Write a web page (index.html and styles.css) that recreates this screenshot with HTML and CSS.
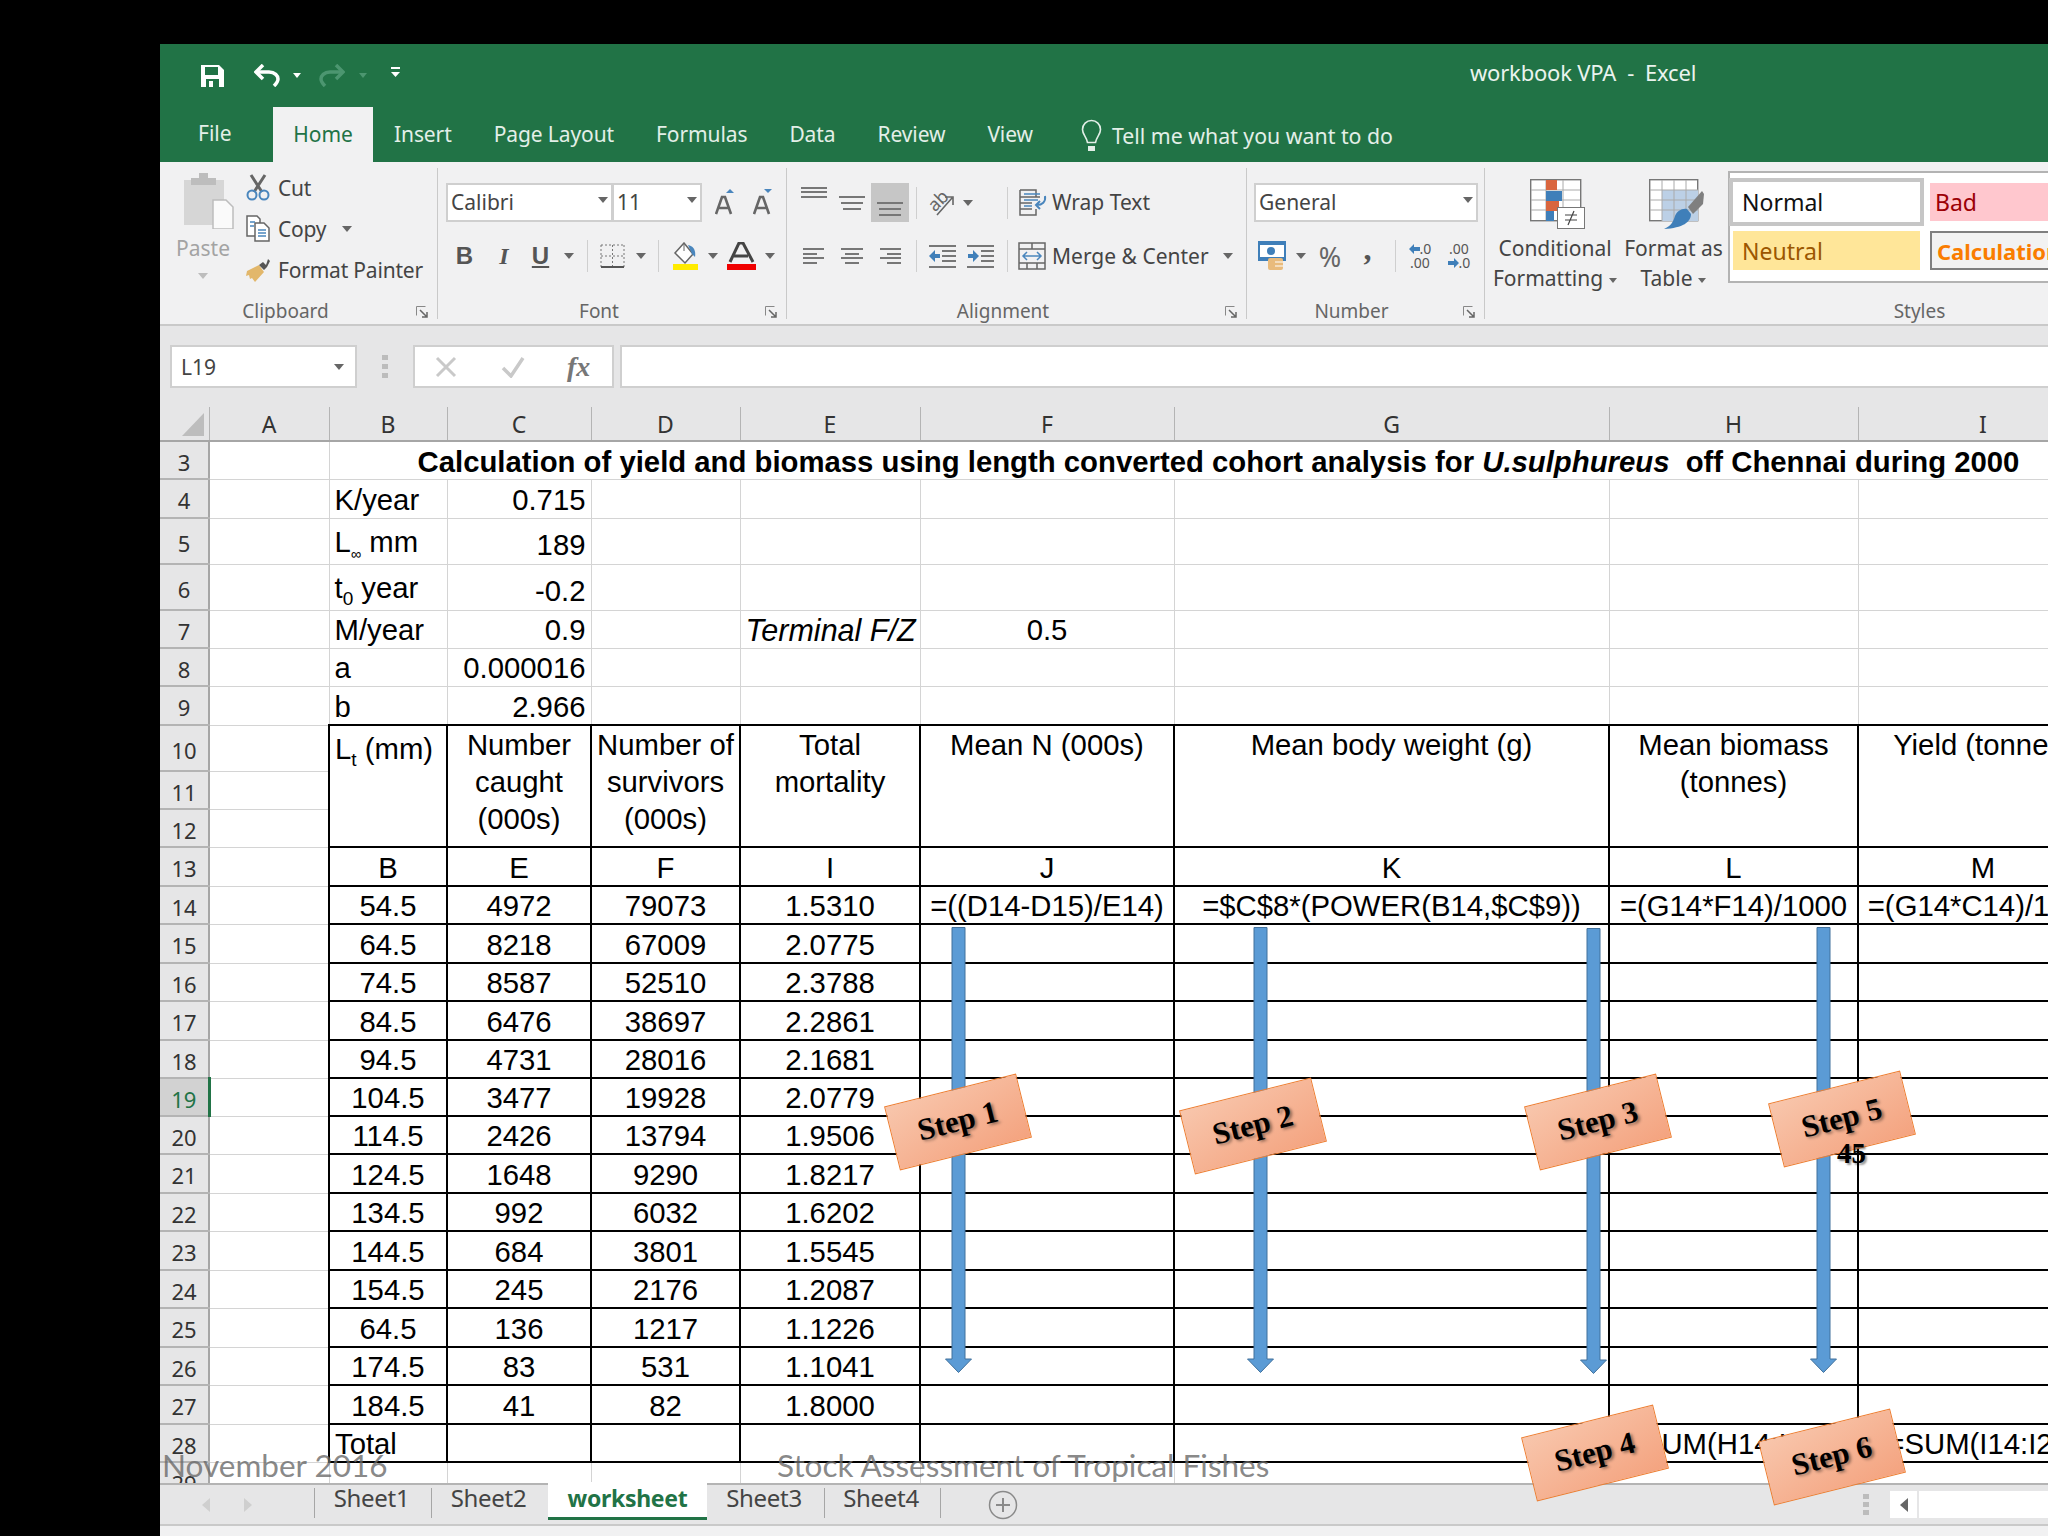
FILE: index.html
```html
<!DOCTYPE html>
<html lang="en">
<head>
<meta charset="utf-8">
<title>workbook VPA - Excel</title>
<link rel="stylesheet" href="styles.css">
</head>
<body>
<div class="slide">
  <header class="titlebar">
    <div class="qat">
      <svg class="qat-save" viewBox="0 0 25 24"><path d="M1 1h18l5 5v17H1z" fill="#fff"/><rect x="5" y="3" width="13" height="8" fill="#217346"/><rect x="6" y="15" width="13" height="8" fill="#217346"/><rect x="9" y="17" width="4" height="6" fill="#fff"/></svg>
      <svg class="qat-undo" viewBox="0 0 26 23"><path d="M9 1 2 8l7 7" fill="none" stroke="#fff" stroke-width="3.5"/><path d="M3 8h12c6 0 9 4 9 7s-2 5-4 7" fill="none" stroke="#fff" stroke-width="3.5"/></svg>
      <span class="caret caret-white qat-c1"></span>
      <svg class="qat-redo" viewBox="0 0 26 23"><path d="M17 1l7 7-7 7" fill="none" stroke="#4c9670" stroke-width="3.5"/><path d="M23 8H11C5 8 2 12 2 15s2 5 4 7" fill="none" stroke="#4c9670" stroke-width="3.5"/></svg>
      <span class="caret caret-dim qat-c2"></span>
      <svg class="qat-more" viewBox="0 0 9 11"><rect width="9" height="2" fill="#fff"/><path d="M0 5h9l-4.500 5z" fill="#fff"/></svg>
    </div>
    <div class="doc-title">workbook VPA &nbsp;-&nbsp; Excel</div>
  </header>
  <nav class="tabs">
    <span class="tab tab-file">File</span>
    <span class="tab tab-active">Home</span>
    <span class="tab">Insert</span>
    <span class="tab">Page Layout</span>
    <span class="tab">Formulas</span>
    <span class="tab">Data</span>
    <span class="tab">Review</span>
    <span class="tab">View</span>
    <span class="tell">
      <svg class="bulb" viewBox="0 0 21 34"><path d="M10.500 1.500a9 9 0 0 0-9 9c0 5 4 7 5 13h8c1-6 5-8 5-13a9 9 0 0 0-9-9z" fill="none" stroke="#e3efe8" stroke-width="1.600"/><path d="M7 27h7v5H7z" fill="#e3efe8"/></svg>
      Tell me what you want to do
    </span>
  </nav>

  <section class="ribbon">
    <div class="group g-clip">
      <div class="group-body">
        <div class="paste">
          <svg class="paste-icon" viewBox="0 0 51 56"><rect x="1" y="7" width="40" height="45" fill="#d6d6d6"/><rect x="8" y="5" width="25" height="7" fill="#bdbdbd"/><rect x="16" y="0" width="9" height="6" fill="#bdbdbd"/><path d="M30 27h13l7 7v22H30z" fill="#fafafa" stroke="#bdbdbd" stroke-width="1.500"/></svg>
          <span class="paste-label">Paste</span>
          <span class="caret caret-light"></span>
        </div>
        <div class="clip-rows">
          <div class="clip-row">
            <svg class="ico-clip" viewBox="0 0 24 27"><path d="M5 1l11 17M19 1 8 18" stroke="#666" stroke-width="3" fill="none"/><circle cx="6" cy="21" r="4.500" fill="none" stroke="#4a86bd" stroke-width="2"/><circle cx="18" cy="21" r="4.500" fill="none" stroke="#4a86bd" stroke-width="2"/></svg>
            <span>Cut</span>
          </div>
          <div class="clip-row">
            <svg class="ico-clip" viewBox="0 0 24 27"><path d="M1 1h10l3 3v17H1z" fill="#fff" stroke="#666" stroke-width="1.500"/><path d="M9 8h9l5 5v13H9z" fill="#fff" stroke="#666" stroke-width="1.500"/><path d="M4 7h5M4 11h4M12 15h8M12 18h8M12 21h8" stroke="#4a86bd" stroke-width="1.500"/></svg>
            <span>Copy</span><span class="caret copy-caret"></span>
          </div>
          <div class="clip-row">
            <svg class="ico-clip" viewBox="0 0 24 27"><path d="M1 15 13 9l5 7-9 10-3-4-2 1-1-4-3 1z" fill="#e2b76b"/><path d="M13 9l4-3 3 3 2-6 2 2-3 6-3 3-5-5z" fill="#555"/></svg>
            <span>Format Painter</span>
          </div>
        </div>
      </div>
      <div class="group-label">Clipboard</div>
      <svg class="launcher" viewBox="0 0 12 12"><path d="M.5.500h9M.5.500v9" stroke="#888" fill="none"/><path d="M4 4l7 7M11 6v5H6" stroke="#666" fill="none" stroke-width="1.500"/></svg>
    </div>

    <div class="group g-font">
      <div class="group-body col">
        <div class="row-top">
          <div class="combo combo-font"><span>Calibri</span><span class="caret"></span></div>
          <div class="combo combo-size"><span>11</span><span class="caret"></span></div>
          <svg class="ico-grow" viewBox="0 0 20 26"><path d="M1 25 7 8h3l6 17M4 19h9" fill="none" stroke="#666" stroke-width="2.600"/><path d="M11 4l4-4 4 4z" fill="#4a86bd"/></svg>
          <svg class="ico-shrink" viewBox="0 0 20 26"><path d="M1 25 7 8h3l6 17M4 19h9" fill="none" stroke="#666" stroke-width="2.600"/><path d="M11 0h8l-4 4z" fill="#4a86bd"/></svg>
        </div>
        <div class="row-bot">
          <span class="slot w37 fmt fmt-b">B</span>
          <span class="slot w42 fmt fmt-i">I</span>
          <span class="slot w31 fmt fmt-u">U</span>
          <span class="slot w26"><span class="caret"></span></span>
          <span class="sep sep-a"></span>
          <span class="slot w41"><svg class="ico-border" viewBox="0 0 25 24"><path d="M1 1h23M1 12h23M1 1v22M12.500 1v22M24 1v22" stroke="#777" stroke-dasharray="2 2" fill="none"/><path d="M1 23h23" stroke="#555" stroke-width="2"/></svg></span>
          <span class="slot w16"><span class="caret"></span></span>
          <span class="sep sep-b"></span>
          <span class="slot w37"><svg class="ico-fill" viewBox="0 0 25 28"><path d="M11 1 2 11l10 10 8-9z" fill="#fff" stroke="#666" stroke-width="1.500"/><path d="M11 1v8" stroke="#666"/><path d="M15 3c6 1 8 6 7 12l-3-3z" fill="#4a86bd"/><rect y="22" width="25" height="6" fill="#ffeb00"/></svg></span>
          <span class="slot w17"><span class="caret"></span></span>
          <span class="slot w41"><svg class="ico-color" viewBox="0 0 29 28"><path d="M3 20 12 1h4l10 19M7 14h14" fill="none" stroke="#444" stroke-width="3"/><rect y="22" width="29" height="6" fill="#f00000"/></svg></span>
          <span class="slot w16"><span class="caret"></span></span>
        </div>
      </div>
      <div class="group-label">Font</div>
      <svg class="launcher" viewBox="0 0 12 12"><path d="M.5.500h9M.5.500v9" stroke="#888" fill="none"/><path d="M4 4l7 7M11 6v5H6" stroke="#666" fill="none" stroke-width="1.500"/></svg>
    </div>

    <div class="group g-align">
      <div class="group-body col">
        <div class="row-top">
          <span class="slot w37"><svg class="ico-lines" viewBox="0 0 26 36"><path d="M0 5h26M0 9h26M0 14h26" stroke="#777" stroke-width="2" transform="translate(0 -2)"/></svg></span>
          <span class="slot w39"><svg class="ico-lines" viewBox="0 0 26 36"><path d="M0 12h26M2 18h22M4 24h18" stroke="#777" stroke-width="2"/></svg></span>
          <span class="slot w38 selected"><svg class="ico-lines" viewBox="0 0 26 36"><path d="M0 18h26M2 24h22M2 30h22" stroke="#777" stroke-width="2"/></svg></span>
          <span class="sep sep-c"></span>
          <span class="slot w38"><svg class="ico-orient" viewBox="0 0 28 26"><text x="0" y="18" class="orient-text" transform="rotate(-45 9 12)">ab</text><path d="M9 25 24 8M17 7h8v8" stroke="#666" stroke-width="1.600" fill="none"/></svg></span>
          <span class="slot w14"><span class="caret"></span></span>
          <span class="sep sep-d"></span>
          <svg class="ico-wrap" viewBox="0 0 28 27"><path d="M1 1h16v7M1 1v25h16v-6M1 8h20M1 14h12M1 20h12" fill="none" stroke="#666" stroke-width="1.500"/><path d="M5 5h16M5 11h14M5 17h8" stroke="#4a86bd" stroke-width="1.500" fill="none"/><path d="M26 7c1 6-3 9-8 9m3-4-4 4 4 4" stroke="#4a86bd" stroke-width="2" fill="none"/></svg>
          <span class="cmd">Wrap Text</span>
        </div>
        <div class="row-bot">
          <span class="slot w37"><svg class="ico-align" viewBox="0 0 22 16"><path d="M0 1h21M0 6h14M0 10h21M0 15h14" stroke="#777" stroke-width="2"/></svg></span>
          <span class="slot w39"><svg class="ico-align" viewBox="0 0 22 16"><path d="M0 1h22M4 6h14M0 10h22M4 15h14" stroke="#777" stroke-width="2"/></svg></span>
          <span class="slot w38"><svg class="ico-align" viewBox="0 0 22 16"><path d="M1 1h21M8 6h14M1 10h21M8 15h14" stroke="#777" stroke-width="2"/></svg></span>
          <span class="sep sep-c"></span>
          <span class="slot w38"><svg class="ico-indent" viewBox="0 0 27 23"><path d="M0 1h27M13 6h14M13 11h14M13 16h14M0 22h27" stroke="#777" stroke-width="2"/><path d="M0 11l6-6v4h5v4H6v4z" fill="#3f7fb9"/></svg></span>
          <span class="slot w38"><svg class="ico-indent" viewBox="0 0 27 23"><path d="M0 1h27M14 6h13M14 11h13M14 16h13M0 22h27" stroke="#777" stroke-width="2"/><path d="M12 11 6 5v4H1v4h5v4z" fill="#3f7fb9"/></svg></span>
          <span class="sep sep-e"></span>
          <svg class="ico-merge" viewBox="0 0 28 28"><rect x="1" y="1" width="26" height="26" fill="none" stroke="#666" stroke-width="1.500"/><path d="M1 7h26M1 21h26M14 1v6M9 21v6M19 21v6" stroke="#666" stroke-width="1.500"/><path d="M6 14h16M9 10l-4 4 4 4M19 10l4 4-4 4" stroke="#4a86bd" stroke-width="1.500" fill="none"/></svg>
          <span class="cmd cmd-merge">Merge &amp; Center</span>
          <span class="caret merge-caret"></span>
        </div>
      </div>
      <div class="group-label">Alignment</div>
      <svg class="launcher" viewBox="0 0 12 12"><path d="M.5.500h9M.5.500v9" stroke="#888" fill="none"/><path d="M4 4l7 7M11 6v5H6" stroke="#666" fill="none" stroke-width="1.500"/></svg>
    </div>

    <div class="group g-num">
      <div class="group-body col">
        <div class="row-top">
          <div class="combo combo-num"><span>General</span><span class="caret"></span></div>
        </div>
        <div class="row-bot">
          <span class="slot w36"><svg class="ico-money" viewBox="0 0 29 30"><rect x="0" y="0" width="28" height="20" fill="#3f7fb9"/><rect x="2" y="4" width="24" height="12" fill="#fff"/><circle cx="13" cy="10" r="4" fill="#3f7fb9"/><rect x="10" y="17" width="15" height="12" rx="2" fill="#e9bb7c"/><path d="M17 21h8M17 25h8" stroke="#fff"/></svg></span>
          <span class="slot w22"><span class="caret"></span></span>
          <span class="slot w36 pct">%</span>
          <span class="slot w39 comma">,</span>
          <span class="sep sep-f"></span>
          <span class="slot w32 dec"><span class="dec-l"><svg class="dec-arrow" viewBox="0 0 11 10"><path d="M0 5l5-5v3h6v4H5v3z" fill="#3f7fb9"/></svg>.0</span><span class="dec-l">.00</span></span>
          <span class="slot w32 dec dec-2"><span class="dec-l">.00</span><span class="dec-l"><svg class="dec-arrow" viewBox="0 0 11 10"><path d="M11 5 6 0v3H0v4h6v3z" fill="#3f7fb9"/></svg>.0</span></span>
        </div>
      </div>
      <div class="group-label">Number</div>
      <svg class="launcher" viewBox="0 0 12 12"><path d="M.5.500h9M.5.500v9" stroke="#888" fill="none"/><path d="M4 4l7 7M11 6v5H6" stroke="#666" fill="none" stroke-width="1.500"/></svg>
    </div>

    <div class="group g-styles">
      <div class="group-body">
        <div class="big big-cf">
          <svg class="big-ico" viewBox="0 0 55 50"><rect x=".7" y=".7" width="50" height="41" fill="#fff" stroke="#777" stroke-width="1.400"/><path d="M16 1v40M33 1v40M1 11h49M1 21h49M1 31h49" stroke="#aaa"/><rect x="16" y="1" width="11" height="10" fill="#d9663f"/><rect x="16" y="12" width="16" height="10" fill="#3f7fb9"/><rect x="16" y="22" width="13" height="10" fill="#d9663f"/><rect x="16" y="32" width="8" height="10" fill="#3f7fb9"/><rect x="27.500" y="28.500" width="27" height="21" fill="#fff" stroke="#777"/><path d="M35 36h12M35 41h12M44 32l-6 14" stroke="#444" stroke-width="1.200"/></svg>
          <span class="big-line">Conditional</span>
          <span class="big-line">Formatting<span class="caret big-caret"></span></span>
        </div>
        <div class="big big-ft">
          <svg class="big-ico" viewBox="0 0 55 50"><rect x=".7" y=".7" width="48" height="41" fill="#fff" stroke="#777" stroke-width="1.400"/><rect x="13" y="11" width="36" height="31" fill="#bcd0e6"/><path d="M13 1v41M25 1v41M37 1v41M1 11h48M1 21h48M1 31h48" stroke="#aaa"/><path d="M39 28 53 12l2 3-1 10-10 10z" fill="#7f7f7f"/><path d="M38 30l4 5c0 8-8 14-27 15 7-3 9-7 11-13 2-5 7-8 12-7z" fill="#3f7fb9"/></svg>
          <span class="big-line">Format as</span>
          <span class="big-line">Table<span class="caret big-caret"></span></span>
        </div>
        <div class="gallery">
          <div class="style st-normal">Normal</div>
          <div class="style st-bad">Bad</div>
          <div class="style st-neutral">Neutral</div>
          <div class="style st-calc">Calculation</div>
        </div>
      </div>
      <div class="group-label">Styles</div>
    </div>
  </section>

  <section class="formula-row">
    <div class="namebox"><span>L19</span><span class="caret"></span></div>
    <div class="dots"><i></i><i></i><i></i></div>
    <div class="fx-box">
      <svg class="fx-x" viewBox="0 0 22 22"><path d="M2 2l18 18M20 2 2 20" stroke="#c9c9c9" stroke-width="3"/></svg>
      <svg class="fx-c" viewBox="0 0 24 22"><path d="M2 12l8 8L22 2" stroke="#c9c9c9" stroke-width="3.500" fill="none"/></svg>
      <span class="fx-f">fx</span>
    </div>
    <div class="fx-input"></div>
  </section>

  <section class="sheet">
    <table class="grid">
      <colgroup><col class="c0"><col class="ca"><col class="cb"><col class="cc"><col class="cd"><col class="ce"><col class="cf"><col class="cg"><col class="ch"><col class="ci"></colgroup>
      <tr class="rh-row"><th class="corner"><span class="tri"></span></th><th>A</th><th>B</th><th>C</th><th>D</th><th>E</th><th>F</th><th>G</th><th>H</th><th>I</th></tr>
      <tr class="r38"><th class="rn">3</th><td></td><td colspan="8" class="title">Calculation of yield and biomass using length converted cohort analysis for <em>U.sulphureus</em>&nbsp; off Chennai during 2000</td></tr>
      <tr class="r39"><th class="rn">4</th><td></td><td>K/year</td><td class="n">0.715</td><td></td><td></td><td></td><td></td><td></td><td></td></tr>
      <tr class="r46"><th class="rn">5</th><td></td><td>L<sub class="inf">∞</sub> mm</td><td class="n low">189</td><td></td><td></td><td></td><td></td><td></td><td></td></tr>
      <tr class="r46"><th class="rn">6</th><td></td><td>t<sub>0</sub> year</td><td class="n low">-0.2</td><td></td><td></td><td></td><td></td><td></td><td></td></tr>
      <tr class="r38"><th class="rn">7</th><td></td><td>M/year</td><td class="n">0.9</td><td></td><td class="term">Terminal F/Z</td><td class="m">0.5</td><td></td><td></td><td></td></tr>
      <tr class="r38"><th class="rn">8</th><td></td><td>a</td><td class="n">0.000016</td><td></td><td></td><td></td><td></td><td></td><td></td></tr>
      <tr class="r39"><th class="rn">9</th><td></td><td>b</td><td class="n">2.966</td><td></td><td></td><td></td><td></td><td></td><td></td></tr>
      <tr class="r46"><th class="rn">10</th><td></td><td class="b hd hd-lt" rowspan="3">L<sub>t</sub> (mm)</td><td class="b hd m" rowspan="3">Number<br>caught<br>(000s)</td><td class="b hd m" rowspan="3">Number of<br>survivors<br>(000s)</td><td class="b hd m" rowspan="3">Total<br>mortality</td><td class="b hd m" rowspan="3">Mean N (000s)</td><td class="b hd m" rowspan="3">Mean body weight (g)</td><td class="b hd m" rowspan="3">Mean biomass<br>(tonnes)</td><td class="b hd m" rowspan="3">Yield (tonnes)</td></tr>
      <tr class="r38"><th class="rn">11</th><td></td></tr>
      <tr class="r38"><th class="rn">12</th><td></td></tr>
      <tr class="r39"><th class="rn">13</th><td></td><td class="b m">B</td><td class="b m">E</td><td class="b m">F</td><td class="b m">I</td><td class="b m">J</td><td class="b m">K</td><td class="b m">L</td><td class="b m">M</td></tr>
      <tr class="r38"><th class="rn">14</th><td></td><td class="b m">54.5</td><td class="b m">4972</td><td class="b m">79073</td><td class="b m">1.5310</td><td class="b m">=((D14-D15)/E14)</td><td class="b m">=$C$8*(POWER(B14,$C$9))</td><td class="b m">=(G14*F14)/1000</td><td class="b m">=(G14*C14)/1000</td></tr>
      <tr class="r39"><th class="rn">15</th><td></td><td class="b m">64.5</td><td class="b m">8218</td><td class="b m">67009</td><td class="b m">2.0775</td><td class="b"></td><td class="b"></td><td class="b"></td><td class="b"></td></tr>
      <tr class="r38"><th class="rn">16</th><td></td><td class="b m">74.5</td><td class="b m">8587</td><td class="b m">52510</td><td class="b m">2.3788</td><td class="b"></td><td class="b"></td><td class="b"></td><td class="b"></td></tr>
      <tr class="r39"><th class="rn">17</th><td></td><td class="b m">84.5</td><td class="b m">6476</td><td class="b m">38697</td><td class="b m">2.2861</td><td class="b"></td><td class="b"></td><td class="b"></td><td class="b"></td></tr>
      <tr class="r38"><th class="rn">18</th><td></td><td class="b m">94.5</td><td class="b m">4731</td><td class="b m">28016</td><td class="b m">2.1681</td><td class="b"></td><td class="b"></td><td class="b"></td><td class="b"></td></tr>
      <tr class="r38"><th class="rn rn-sel">19</th><td></td><td class="b m">104.5</td><td class="b m">3477</td><td class="b m">19928</td><td class="b m">2.0779</td><td class="b"></td><td class="b"></td><td class="b"></td><td class="b"></td></tr>
      <tr class="r38"><th class="rn">20</th><td></td><td class="b m">114.5</td><td class="b m">2426</td><td class="b m">13794</td><td class="b m">1.9506</td><td class="b"></td><td class="b"></td><td class="b"></td><td class="b"></td></tr>
      <tr class="r39"><th class="rn">21</th><td></td><td class="b m">124.5</td><td class="b m">1648</td><td class="b m">9290</td><td class="b m">1.8217</td><td class="b"></td><td class="b"></td><td class="b"></td><td class="b"></td></tr>
      <tr class="r38"><th class="rn">22</th><td></td><td class="b m">134.5</td><td class="b m">992</td><td class="b m">6032</td><td class="b m">1.6202</td><td class="b"></td><td class="b"></td><td class="b"></td><td class="b"></td></tr>
      <tr class="r39"><th class="rn">23</th><td></td><td class="b m">144.5</td><td class="b m">684</td><td class="b m">3801</td><td class="b m">1.5545</td><td class="b"></td><td class="b"></td><td class="b"></td><td class="b"></td></tr>
      <tr class="r38"><th class="rn">24</th><td></td><td class="b m">154.5</td><td class="b m">245</td><td class="b m">2176</td><td class="b m">1.2087</td><td class="b"></td><td class="b"></td><td class="b"></td><td class="b"></td></tr>
      <tr class="r39"><th class="rn">25</th><td></td><td class="b m">64.5</td><td class="b m">136</td><td class="b m">1217</td><td class="b m">1.1226</td><td class="b"></td><td class="b"></td><td class="b"></td><td class="b"></td></tr>
      <tr class="r38"><th class="rn">26</th><td></td><td class="b m">174.5</td><td class="b m">83</td><td class="b m">531</td><td class="b m">1.1041</td><td class="b"></td><td class="b"></td><td class="b"></td><td class="b"></td></tr>
      <tr class="r39"><th class="rn">27</th><td></td><td class="b m">184.5</td><td class="b m">41</td><td class="b m">82</td><td class="b m">1.8000</td><td class="b"></td><td class="b"></td><td class="b"></td><td class="b"></td></tr>
      <tr class="r38"><th class="rn">28</th><td></td><td class="b">Total</td><td class="b"></td><td class="b"></td><td class="b"></td><td class="b"></td><td class="b"></td><td class="b m">=SUM(H14:H27)</td><td class="b m">=SUM(I14:I27)</td></tr>
      <tr class="r38"><th class="rn">29</th><td></td><td></td><td></td><td></td><td></td><td></td><td></td><td></td><td></td></tr>
    </table>
  </section>

  <footer class="sheetbar">
    <svg class="nav nav-l" viewBox="0 0 8 14"><path d="M8 0v14L0 7z" fill="#cfcfcf"/></svg>
    <svg class="nav nav-r" viewBox="0 0 8 14"><path d="M0 0v14l8-7z" fill="#cfcfcf"/></svg>
    <div class="sheet-tabs">
      <span class="stab">Sheet1</span>
      <span class="stab">Sheet2</span>
      <span class="stab stab-active">worksheet</span>
      <span class="stab stab-after">Sheet3</span>
      <span class="stab">Sheet4</span>
    </div>
    <svg class="add" viewBox="0 0 30 30"><circle cx="15" cy="15" r="13.500" fill="none" stroke="#8a8a8a" stroke-width="1.500"/><path d="M15 8v14M8 15h14" stroke="#8a8a8a" stroke-width="2"/></svg>
    <div class="dots dots-bar"><i></i><i></i><i></i></div>
    <div class="hscroll-btn"><svg viewBox="0 0 8 14"><path d="M8 0v14L0 7z" fill="#666"/></svg></div>
    <div class="hscroll-track"></div>
  </footer>
  <div class="status"></div>

  <div class="slide-foot foot-date">November 2016</div>
  <div class="slide-foot foot-name">Stock Assessment of Tropical Fishes</div>

  <svg class="arrow a1" viewBox="0 0 27 446"><path d="M7 .5h13V432h6.500L13.500 445.500.5 432H7z"/></svg>
  <svg class="arrow a2" viewBox="0 0 27 446"><path d="M7 .5h13V432h6.500L13.500 445.500.5 432H7z"/></svg>
  <svg class="arrow a3" viewBox="0 0 27 446"><path d="M7 .5h13V432h6.500L13.500 445.500.5 432H7z"/></svg>
  <svg class="arrow a4" viewBox="0 0 27 446"><path d="M7 .5h13V432h6.500L13.500 445.500.5 432H7z"/></svg>

  <div class="step s1">Step 1</div>
  <div class="step s2">Step 2</div>
  <div class="step s3">Step 3</div>
  <div class="step s5">Step 5</div>
  <div class="step s4">Step 4</div>
  <div class="step s6">Step 6</div>
  <div class="stray">45</div>
</div>
</body>
</html>
```

FILE: styles.css
```css
* { box-sizing: border-box; }
html, body { margin: 0; height: 100%; overflow: hidden; background: #000; }
body { font-family: "Noto Sans", "Liberation Sans", sans-serif; font-size: 21px; color: #444; }

.slide { position: relative; margin: 44px 0 0 160px; width: 1888px; height: 1492px; overflow: hidden; background: #f1f1f2; display: flex; flex-direction: column; }

/* title bar */
.titlebar { flex: none; height: 63px; background: #217346; display: flex; align-items: center; }
.qat { width: 1310px; height: 63px; display: flex; align-items: center; padding: 0 0 0 40px; }
.qat-save { width: 25px; height: 24px; }
.qat-undo { width: 26px; height: 23px; margin-left: 29px; }
.qat-c1 { margin-left: 13px; }
.qat-redo { width: 26px; height: 23px; margin-left: 18px; }
.qat-c2 { margin-left: 14px; }
.qat-more { width: 9px; height: 11px; margin-left: 24px; margin-top: -6px; }
.doc-title { color: #eaf3ee; font-size: 22px; letter-spacing: -.2px; white-space: nowrap; margin-top: -8px; }

.tabs { flex: none; height: 55px; background: #217346; display: flex; align-items: stretch; color: #e3efe8; padding-left: 17px; }
.tab { padding: 8px 21px 0; line-height: 38px; white-space: nowrap; letter-spacing: -.1px; }
.tab-file { width: 96px; line-height: 36px; letter-spacing: 0; }
.tab-active { width: 100px; padding: 8px 0 0; text-align: center; background: #f1f1f2; color: #217346; letter-spacing: 0; }
.tell { margin-left: 27px; padding-top: 2px; line-height: 40px; display: flex; align-items: center; gap: 10px; white-space: nowrap; font-size: 21.300px; }
.bulb { width: 21px; height: 34px; margin-top: 0; }

/* carets */
.caret { display: inline-block; width: 0; height: 0; border-left: 5px solid transparent; border-right: 5px solid transparent; border-top: 6px solid #666; flex: none; }
.caret-white { border-top-color: #fff; border-left-width: 4px; border-right-width: 4px; border-top-width: 5px; }
.caret-dim { border-top-color: #4c9670; border-left-width: 4px; border-right-width: 4px; border-top-width: 5px; }
.caret-light { border-top-color: #bdbdbd; }

/* ribbon */
.ribbon { flex: none; height: 164px; display: flex; padding-top: 6px; border-bottom: 2px solid #c9c9c9; background: #f1f1f2; }
.group { position: relative; height: 151px; flex: none; border-right: 1px solid #c9c9c9; display: flex; flex-direction: column; }
.group-body { height: 131px; flex: none; display: flex; }
.group-body.col { flex-direction: column; }
.group-label { height: 24px; line-height: 24px; text-align: center; font-size: 19px; color: #666; flex: none; }
.launcher { position: absolute; right: 9px; top: 138px; width: 12px; height: 12px; }

.g-clip { width: 278px; }
.g-clip .group-label { padding-right: 26px; }
.g-font { width: 349px; padding-left: 8px; }
.g-font .group-label { padding-right: 34px; }
.g-align { width: 460px; padding-left: 8px; }
.g-align .group-label { padding-right: 35px; }
.g-num { width: 238px; padding-left: 7px; }
.g-num .group-label { padding-right: 35px; }
.g-styles { width: 866px; border-right: 0; padding-left: 3px; }

.paste { width: 52px; margin-left: 22px; display: flex; flex-direction: column; align-items: center; padding-top: 5px; }
.paste-icon { width: 51px; height: 56px; flex: none; }
.paste-label { color: #a3a3a3; line-height: 24px; margin: 7px 10px 0 0; }
.paste .caret { margin: 13px 10px 0 0; }
.clip-rows { margin-left: 12px; display: flex; flex-direction: column; margin-top: -1px; }
.clip-row { height: 41px; display: flex; align-items: center; gap: 8px; white-space: nowrap; letter-spacing: -.2px; }
.ico-clip { width: 24px; height: 27px; flex: none; }
.copy-caret { margin-left: 8px; }

.row-top { margin-top: 15px; height: 39px; display: flex; align-items: stretch; flex: none; }
.row-bot { margin-top: 15px; height: 38px; display: flex; align-items: center; flex: none; }
.combo { background: #fff; border: 2px solid #cfcfcf; display: flex; align-items: center; justify-content: space-between; padding: 0 3px 1px 3px; height: 39px; }
.combo-font { width: 167px; }
.combo-size { width: 90px; margin-left: -1px; }
.combo-num { width: 224px; }
.combo .caret { margin-top: -4px; }
.ico-grow { width: 20px; height: 26px; margin: 6px 0 0 13px; }
.ico-shrink { width: 20px; height: 26px; margin: 6px 0 0 18px; }

.slot { display: flex; align-items: center; justify-content: center; flex: none; height: 38px; }
.w14 { width: 14px; } .w16 { width: 16px; } .w17 { width: 17px; } .w22 { width: 22px; } .w26 { width: 26px; }
.w31 { width: 31px; } .w32 { width: 32px; } .w36 { width: 36px; } .w37 { width: 37px; } .w38 { width: 38px; }
.w39 { width: 39px; } .w41 { width: 41px; } .w42 { width: 42px; }
.row-top .slot { height: 39px; }
.selected { background: #c6c6c6; }
.fmt { font-family: "Liberation Sans", sans-serif; font-size: 24px; color: #555; font-weight: 700; }
.fmt-i { font-style: italic; font-family: "Liberation Serif", serif; }
.fmt-u { text-decoration: underline; text-underline-offset: 2px; }
.sep { width: 1px; height: 32px; background: #cfcfcf; flex: none; }
.sep-a { margin: 0 4px 0 5px; }
.sep-b { margin: 0 8px 0 9px; }
.sep-c { margin: 0 6px 0 7px; }
.row-top .sep-c { align-self: center; }
.sep-d { margin: 0 11px 0 32px; align-self: center; }
.sep-e { margin: 0 10px 0 8px; }
.sep-f { margin: 0 8px 0 8px; }
.ico-border { width: 25px; height: 24px; }
.ico-fill { width: 25px; height: 28px; }
.ico-color { width: 29px; height: 28px; }
.ico-lines { width: 26px; height: 36px; }
.ico-orient { width: 28px; height: 26px; }
.orient-text { font-family: "Noto Sans", sans-serif; font-size: 18px; fill: #666; }
.ico-wrap { width: 28px; height: 27px; flex: none; align-self: center; }
.cmd { margin-left: 5px; align-self: center; white-space: nowrap; padding-bottom: 1px; }
.cmd-merge { margin-left: 6px; }
.merge-caret { margin-left: 14px; }
.ico-align { width: 22px; height: 16px; }
.ico-indent { width: 27px; height: 23px; }
.ico-merge { width: 28px; height: 28px; flex: none; }
.ico-money { width: 29px; height: 30px; }
.pct { font-size: 27px; color: #666; }
.comma { font-family: "Liberation Serif", serif; font-weight: 700; font-size: 32px; color: #555; padding-bottom: 14px; }
.dec { flex-direction: column; font-size: 14px; line-height: 14px; color: #555; }
.dec-2 { margin-left: 7px; }
.dec-l { display: flex; align-items: center; }
.dec-arrow { width: 11px; height: 10px; }

.big { flex: none; display: flex; flex-direction: column; align-items: center; padding-top: 11px; }
.big-cf { width: 134px; }
.big-ft { width: 103px; }
.big-ico { width: 55px; height: 50px; margin: 0 0 4px 5px; flex: none; }
.big-line { line-height: 30px; white-space: nowrap; }
.big-caret { margin: 0 0 3px 6px; border-left-width: 4px; border-right-width: 4px; border-top-width: 5px; }

.gallery { margin: 3px -100px 0 3px; width: 500px; height: 112px; background: #fff; border: 2px solid #b3b3b3; padding: 5px 0 0 0; display: grid; grid-template-columns: 194px 200px; grid-template-rows: 48px 39px; row-gap: 5px; column-gap: 6px; }
.style { display: flex; align-items: center; font-size: 23px; padding-left: 9px; white-space: nowrap; }
.st-normal { border: 4px solid #c6c6c6; background: #fff; color: #111; margin-left: -1px; }
.st-bad { background: #ffc7ce; color: #9c0006; margin: 5px 0; padding-left: 5px; }
.st-neutral { background: #ffe699; color: #9c5700; margin: 0 4px 0 3px; }
.st-calc { background: #f2f2f2; border: 2px solid #7f7f7f; color: #fa7d00; font-weight: 700; font-size: 22px; padding-left: 5px; }

/* formula row */
.formula-row { flex: none; height: 81px; background: #e6e6e7; padding: 19px 0 19px 10px; display: flex; align-items: stretch; }
.namebox { width: 187px; background: #fff; border: 2px solid #cfcfcf; display: flex; align-items: center; justify-content: space-between; padding: 0 11px 0 9px; }
.dots { width: 56px; display: flex; flex-direction: column; align-items: center; justify-content: center; gap: 4px; }
.dots i { width: 6px; height: 5px; background: #bcbcbc; display: block; }
.fx-box { width: 201px; background: #fff; border: 2px solid #cfcfcf; display: flex; align-items: center; }
.fx-x { width: 22px; height: 22px; margin-left: 20px; }
.fx-c { width: 24px; height: 22px; margin-left: 44px; }
.fx-f { font-family: "Liberation Serif", serif; font-style: italic; font-weight: 700; font-size: 28px; color: #777; margin-left: 42px; }
.fx-input { flex: 1; background: #fff; margin-left: 6px; border-top: 2px solid #cfcfcf; border-bottom: 2px solid #cfcfcf; border-left: 2px solid #cfcfcf; }

/* sheet */
.sheet { flex: none; height: 1076px; background: #fff; overflow: hidden; }
.grid { border-collapse: collapse; table-layout: fixed; width: 1948px; font-family: "Liberation Sans", Arial, sans-serif; font-size: 29.300px; color: #000; }
.c0 { width: 49px; } .ca { width: 120px; } .cb { width: 118px; } .cc { width: 144px; } .cd { width: 149px; }
.ce { width: 180px; } .cf { width: 254px; } .cg { width: 435px; } .ch { width: 249px; } .ci { width: 250px; }
.rh-row { height: 34px; }
.r38 { height: 38px; } .r39 { height: 39px; } .r46 { height: 46px; }
.rh-row th { background: #e6e6e7; font: 400 23px "Noto Sans", sans-serif; color: #333; border-right: 1px solid #b4b4b4; border-bottom: 2px solid #a6a6a6; padding: 0; line-height: 30px; }
.corner { position: relative; }
.tri { position: absolute; left: 22px; top: 6px; width: 22px; height: 23px; background: #bdbdbd; clip-path: polygon(100% 0, 100% 100%, 0 100%); }
.rn { background: #e6e6e7; font: 400 22px "Noto Sans", sans-serif; color: #333; border-right: 2px solid #a6a6a6; border-bottom: 2px solid #b4b4b4; padding: 3px 0 0; vertical-align: middle; }
.rn-sel { background: #d2d2d2; color: #217346; border-right: 3px solid #217346; }
td { border: 1px solid #d4d4d4; padding: 2px 5px 0; white-space: nowrap; overflow: hidden; line-height: 1; vertical-align: middle; }
.b { border: 2px solid #000; }
.m { text-align: center; }
.n { text-align: right; }
.low { vertical-align: bottom; padding: 0 5px 4px; }
.title { text-align: center; font-weight: 700; }
.term { font-style: italic; font-size: 30.500px; }
.hd { vertical-align: top; padding-top: 0; line-height: 37px; }
.hd-lt { padding-top: 4px; }
sub { font-size: 65%; line-height: 0; }
.inf { font-size: 50%; }

/* sheet bar */
.sheetbar { flex: none; height: 43px; background: #e6e6e7; border-top: 2px solid #b4b4b4; border-bottom: 2px solid #c9c9c9; display: flex; align-items: center; position: relative; }
.nav { width: 8px; height: 14px; flex: none; }
.nav-l { margin-left: 42px; }
.nav-r { margin-left: 34px; }
.sheet-tabs { display: flex; align-self: flex-start; margin-left: 62px; height: 37px; }
.stab { width: 117px; padding-right: 3px; text-align: center; font-size: 24px; line-height: 20px; margin-top: 3px; height: 30px; border-left: 1px solid #a6a6a6; white-space: nowrap; letter-spacing: -.3px; }
.stab-active { margin-top: -3px; height: 38px; line-height: 32px; width: 159px; padding: 0; font-size: 23px; background: #fff; border-left: 0; border-bottom: 3px solid #217346; color: #217346; font-weight: 700; }
.stab-after { border-left: 0; }
.stab:last-child { border-right: 1px solid #a6a6a6; }
.add { width: 30px; height: 30px; margin-left: 47px; flex: none; }
.dots-bar { width: 6px; margin-left: 845px; gap: 3px; }
.hscroll-btn { margin-left: 21px; width: 27px; height: 27px; background: #fff; display: flex; align-items: center; justify-content: center; flex: none; }
.hscroll-btn svg { width: 8px; height: 14px; }
.hscroll-track { margin-left: 2px; flex: 1; height: 27px; background: #fff; }
.status { flex: 1; background: #f1f1f2; }

/* slide overlays */
.slide-foot { position: absolute; top: 1403px; line-height: 36px; font-family: Lato, "Noto Sans", sans-serif; font-size: 31.500px; color: rgba(105, 105, 105, .8); white-space: nowrap; }
.foot-date { left: 2px; }
.foot-name { left: 617px; }

.arrow { position: absolute; width: 27px; height: 446px; top: 883px; }
.arrow path { fill: #5b9bd5; stroke: #41719c; stroke-width: 1; }
.a1 { left: 785px; }
.a2 { left: 1087px; }
.a3 { left: 1420px; top: 884px; }
.a4 { left: 1650px; }

.step { position: absolute; width: 136px; height: 66px; transform: rotate(-14deg); background: linear-gradient(160deg, #f8c6ac, #f4a37f); border: 1.500px solid #ed7d31; display: flex; align-items: center; justify-content: center; font-family: "Liberation Serif", serif; font-weight: 700; font-size: 31px; color: #000; text-shadow: 2px 2px 3px rgba(0, 0, 0, .4); white-space: nowrap; padding-bottom: 2px; }
.s1 { left: 730px; top: 1045px; }
.s2 { left: 1025px; top: 1049px; }
.s3 { left: 1370px; top: 1045px; }
.s5 { left: 1614px; top: 1042px; }
.s4 { left: 1367px; top: 1376px; }
.s6 { left: 1604px; top: 1380px; }
.stray { position: absolute; left: 1677px; top: 1092px; font-family: "Liberation Serif", serif; font-weight: 700; font-size: 29px; line-height: 34px; color: #000; text-shadow: 2px 2px 2px rgba(0, 0, 0, .4); }
```
